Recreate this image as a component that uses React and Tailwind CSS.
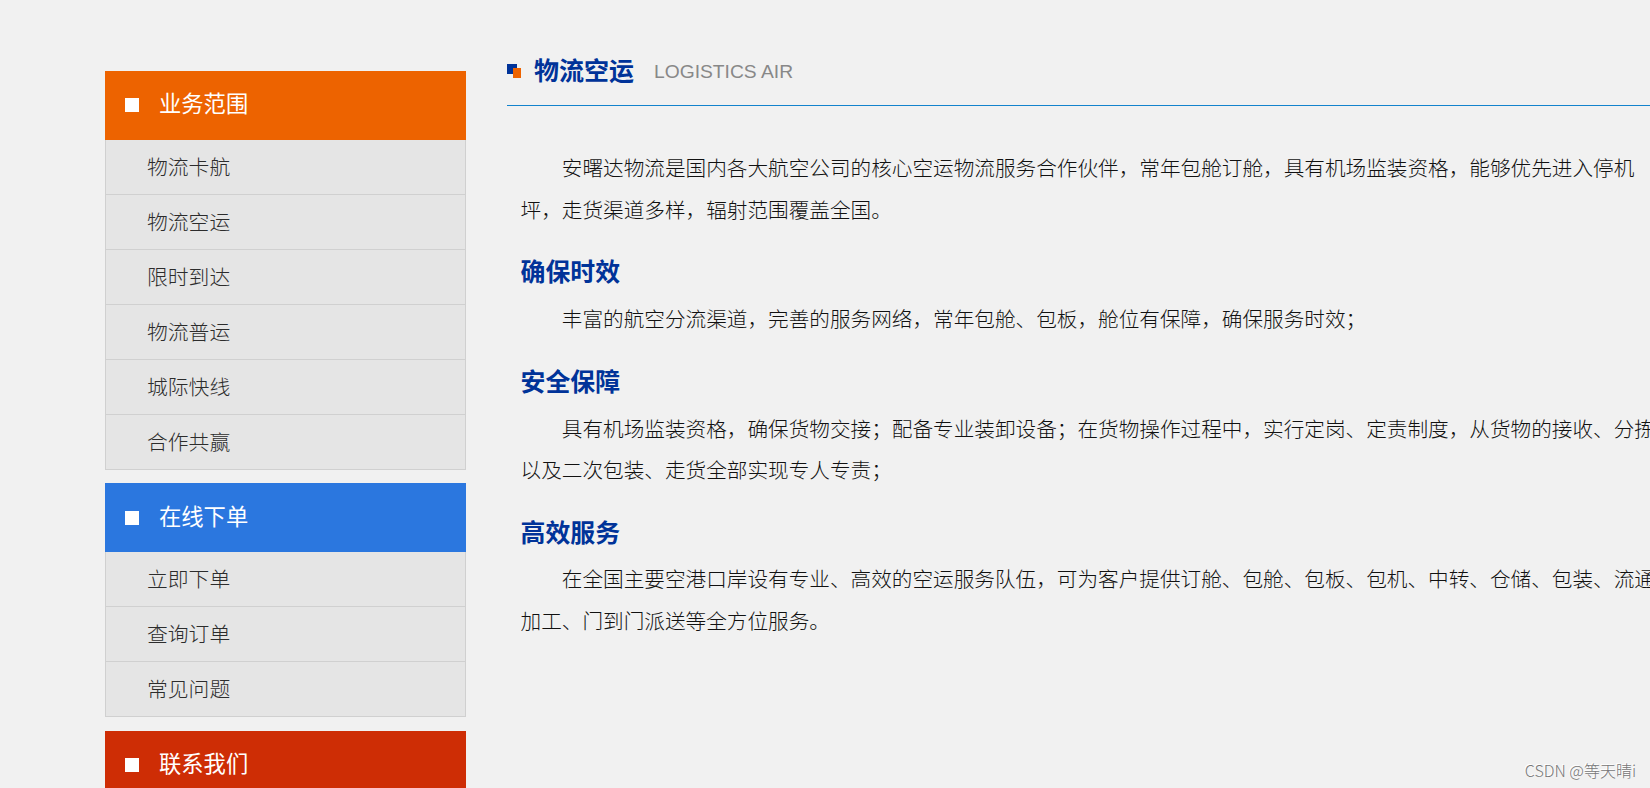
const menus = [
  {
    title: '业务范围',
    color: 'bg-[#ed6300]',
    items: ['物流卡航', '物流空运', '限时到达', '物流普运', '城际快线', '合作共赢'],
  },
  {
    title: '在线下单',
    color: 'bg-[#2b77df]',
    items: ['立即下单', '查询订单', '常见问题'],
  },
  { title: '联系我们', color: 'bg-[#ce2d05]', items: [] },
];

const sections = [
  {
    title: '确保时效',
    text: '丰富的航空分流渠道，完善的服务网络，常年包舱、包板，舱位有保障，确保服务时效；',
  },
  {
    title: '安全保障',
    text: '具有机场监装资格，确保货物交接；配备专业装卸设备；在货物操作过程中，实行定岗、定责制度，从货物的接收、分拣以及二次包装、走货全部实现专人专责；',
  },
  {
    title: '高效服务',
    text: '在全国主要空港口岸设有专业、高效的空运服务队伍，可为客户提供订舱、包舱、包板、包机、中转、仓储、包装、流通加工、门到门派送等全方位服务。',
  },
];

function SideMenu({ title, color, items }) {
  return (
    <div>
      <h3 className={`flex h-[69px] items-center pl-5 text-[22.3px] text-white ${color}`}>
        <span className="mr-5 mb-[0.2px] h-3.5 w-3.5 bg-white"></span>
        <span className="-mt-px">{title}</span>
      </h3>
      <ul className="border-x border-[#d0d0d0] bg-[#e5e5e5]">
        {items.map((item) => (
          <li
            key={item}
            className="h-[55px] border-b border-[#d0d0d0] pl-[41px] text-[20.8px] leading-[56px] font-light text-[#2c2c2c]"
          >
            {item}
          </li>
        ))}
      </ul>
    </div>
  );
}

function Paragraph({ children }) {
  return (
    <p className="indent-[2em] text-[20.64px] leading-[41.25px] font-light text-[#111]">
      {children}
    </p>
  );
}

export default function App() {
  return (
    <div className="relative h-[788px] w-full overflow-hidden bg-[#f1f1f1] font-['Liberation_Sans','Noto_Sans_CJK_SC',sans-serif]">
      <div className="flex w-[1750px] pl-[105px]">
        {/* Sidebar */}
        <aside className="mt-[71px] flex w-[361px] shrink-0 flex-col gap-[13.4px]">
          {menus.map((menu) => (
            <SideMenu key={menu.title} {...menu} />
          ))}
        </aside>

        {/* Content */}
        <main className="ml-[41px] flex-1">
          <div className="flex h-[106px] items-center border-b border-[#1383cd] pt-[37px]">
            <svg className="mr-[13px] h-3.5 w-3.5" viewBox="0 0 14 14">
              <rect width="10" height="10" fill="#003399" />
              <rect x="6" y="4" width="8" height="10" fill="#ed6300" />
            </svg>
            <h1 className="mt-px text-[25px] leading-none font-bold text-[#003399]">物流空运</h1>
            <span className="mt-[2px] ml-5 text-[19.25px] leading-none text-[#888]">
              LOGISTICS AIR
            </span>
          </div>
          <div className="w-[1155px] pt-[42.4px] pl-[13.5px]">
            <Paragraph>
              安曙达物流是国内各大航空公司的核心空运物流服务合作伙伴，常年包舱订舱，具有机场监装资格，能够优先进入停机坪，走货渠道多样，辐射范围覆盖全国。
            </Paragraph>
            {sections.map((section) => (
              <section key={section.title}>
                <h2 className="h-[68.25px] pt-[21.5px] text-[24.9px] leading-[40px] font-bold text-[#003399]">
                  {section.title}
                </h2>
                <Paragraph>{section.text}</Paragraph>
              </section>
            ))}
          </div>
        </main>
      </div>
      <span className="absolute right-[14px] bottom-[6px] font-['Noto_Sans_CJK_SC',sans-serif] text-[16px] font-light text-[#777] [text-shadow:-1px_-1px_0_#fff]">
        CSDN @等天晴i
      </span>
    </div>
  );
}
